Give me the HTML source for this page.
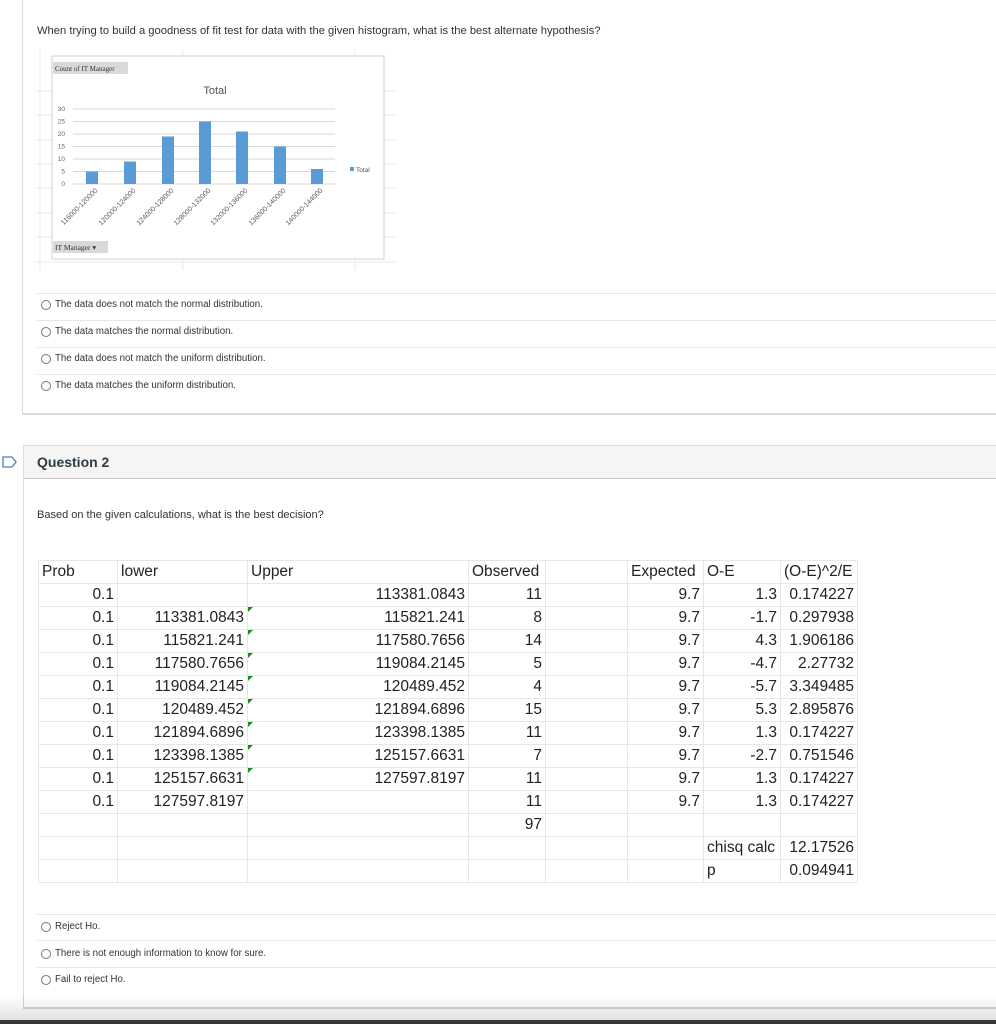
<!DOCTYPE html>
<html><head><meta charset="utf-8"><style>
body{margin:0;width:996px;height:1024px;overflow:hidden;background:#fff;font-family:"Liberation Sans",sans-serif;color:#2d3b45;position:relative}
.a{position:absolute}
.q{font-size:10px;white-space:nowrap}
.o{font-size:9.7px;color:#333}
.hl{position:absolute;height:1px;background:#e4e6e8;left:37px;right:0}
.r{position:absolute;width:8px;height:8px;border:1px solid #777;border-radius:50%;left:41px}
table{position:absolute;left:38px;top:560px;border-collapse:collapse;table-layout:fixed;font-size:15.5px;color:#222}
td{border:1px solid #e6e6e6;height:22px;padding:0 3px;text-align:right;white-space:nowrap;overflow:visible;line-height:22px;position:relative}
td.l{text-align:left}
.g::before{content:"";position:absolute;left:0;top:0;border-top:5px solid #1a8a1a;border-right:5px solid transparent}
</style></head><body>
<div class="a" style="left:22px;top:0;width:1px;height:414px;background:#dcdcdc"></div>
<div class="a" style="left:22px;top:413px;right:0;height:2px;background:#dcdcdc"></div>
<div class="a q" style="left:37px;top:25px;font-size:11.2px;color:#333">When trying to build a goodness of fit test for data with the given histogram, what is the best alternate hypothesis?</div>

<svg class="a" style="left:36px;top:46px" width="360" height="225" viewBox="36 46 360 225">
<g stroke="#e8e8e8" stroke-width="1">
<line x1="40" y1="50" x2="40" y2="270"/><line x1="183" y1="50" x2="183" y2="270"/><line x1="355" y1="50" x2="355" y2="270"/>
<line x1="36" y1="91" x2="396" y2="91"/><line x1="36" y1="115" x2="396" y2="115"/><line x1="36" y1="140" x2="396" y2="140"/><line x1="36" y1="164" x2="396" y2="164"/><line x1="36" y1="188" x2="396" y2="188"/><line x1="36" y1="213" x2="396" y2="213"/><line x1="36" y1="237" x2="396" y2="237"/><line x1="36" y1="262" x2="396" y2="262"/>
</g>
<rect x="52" y="56" width="332" height="203" fill="#fff" stroke="#d0d0d0"/>
<rect x="53" y="62" width="75" height="12" fill="#d9d9d9"/>
<text x="55" y="71" font-size="7" fill="#333" font-family="Liberation Serif">Count of IT Manager</text>
<text x="215" y="94" font-size="11" fill="#555" text-anchor="middle" font-family="Liberation Sans">Total</text>
<g stroke="#d9d9d9"><line x1="73" y1="109" x2="335" y2="109"/><line x1="73" y1="121.5" x2="335" y2="121.5"/><line x1="73" y1="134" x2="335" y2="134"/><line x1="73" y1="146.5" x2="335" y2="146.5"/><line x1="73" y1="159" x2="335" y2="159"/><line x1="73" y1="171.5" x2="335" y2="171.5"/><line x1="73" y1="184" x2="335" y2="184"/></g>
<g font-size="6.5" fill="#666" font-family="Liberation Sans" text-anchor="end">
<text x="65" y="111">30</text><text x="65" y="123.5">25</text><text x="65" y="136">20</text><text x="65" y="148.5">15</text><text x="65" y="161">10</text><text x="65" y="173.5">5</text><text x="65" y="186">0</text></g>
<g fill="#5b9bd5">
<rect x="86" y="171.5" width="12" height="12.5"/><rect x="124" y="161.5" width="12" height="22.5"/><rect x="162" y="136.5" width="12" height="47.5"/><rect x="199" y="121.5" width="12" height="62.5"/><rect x="236" y="131.5" width="12" height="52.5"/><rect x="274" y="146.5" width="12" height="37.5"/><rect x="311" y="169" width="12" height="15"/>
<rect x="350" y="167" width="4" height="4"/></g>
<text x="356" y="172" font-size="6.5" fill="#555" font-family="Liberation Sans">Total</text>
<g font-size="7" fill="#555" font-family="Liberation Sans" text-anchor="end">
<text transform="translate(98,191) rotate(-45)">116000-120000</text>
<text transform="translate(136,191) rotate(-45)">120000-124000</text>
<text transform="translate(174,191) rotate(-45)">124000-128000</text>
<text transform="translate(211,191) rotate(-45)">128000-132000</text>
<text transform="translate(248,191) rotate(-45)">132000-136000</text>
<text transform="translate(286,191) rotate(-45)">136000-140000</text>
<text transform="translate(323,191) rotate(-45)">140000-144000</text></g>
<rect x="53" y="241" width="55" height="12" fill="#d9d9d9"/>
<text x="55" y="250" font-size="7.5" fill="#333" font-family="Liberation Serif">IT Manager  ▾</text>
</svg>

<div class="hl" style="top:293px"></div><div class="hl" style="top:320px"></div><div class="hl" style="top:347px"></div><div class="hl" style="top:374px"></div>
<div class="r" style="top:300px"></div><div class="a q o" style="left:55px;top:299px">The data does not match the normal distribution.</div>
<div class="r" style="top:327px"></div><div class="a q o" style="left:55px;top:326px">The data matches the normal distribution.</div>
<div class="r" style="top:354px"></div><div class="a q o" style="left:55px;top:353px">The data does not match the uniform distribution.</div>
<div class="r" style="top:381px"></div><div class="a q o" style="left:55px;top:380px">The data matches the uniform distribution.</div>

<svg class="a" style="left:1px;top:455px" width="16" height="14"><path d="M2 2H11L15 7L11 12H2Z" fill="none" stroke="#4a7fb5" stroke-width="1.3"/></svg>
<div class="a" style="left:23px;top:445px;right:0;height:32px;background:#f5f5f5;border-top:1px solid #ddd;border-left:1px solid #ddd;border-bottom:1px solid #c8c8c8"></div>
<div class="a" style="left:37px;top:454px;font-size:14px;font-weight:bold;color:#2d3b45">Question 2</div>
<div class="a" style="left:23px;top:477px;width:1px;height:531px;background:#ddd"></div>
<div class="a q" style="left:37px;top:509px;font-size:11px;color:#333">Based on the given calculations, what is the best decision?</div>

<table>
<colgroup><col style="width:79px"><col style="width:130px"><col style="width:221px"><col style="width:77px"><col style="width:82px"><col style="width:76px"><col style="width:77px"><col style="width:77px"></colgroup>
<tr><td class="l">Prob</td><td class="l">lower</td><td class="l">Upper</td><td class="l">Observed</td><td></td><td class="l">Expected</td><td class="l">O-E</td><td class="l">(O-E)^2/E</td></tr>
<tr><td>0.1</td><td></td><td>113381.0843</td><td>11</td><td></td><td>9.7</td><td>1.3</td><td>0.174227</td></tr>
<tr><td>0.1</td><td>113381.0843</td><td class="g">115821.241</td><td>8</td><td></td><td>9.7</td><td>-1.7</td><td>0.297938</td></tr>
<tr><td>0.1</td><td>115821.241</td><td class="g">117580.7656</td><td>14</td><td></td><td>9.7</td><td>4.3</td><td>1.906186</td></tr>
<tr><td>0.1</td><td>117580.7656</td><td class="g">119084.2145</td><td>5</td><td></td><td>9.7</td><td>-4.7</td><td>2.27732</td></tr>
<tr><td>0.1</td><td>119084.2145</td><td class="g">120489.452</td><td>4</td><td></td><td>9.7</td><td>-5.7</td><td>3.349485</td></tr>
<tr><td>0.1</td><td>120489.452</td><td class="g">121894.6896</td><td>15</td><td></td><td>9.7</td><td>5.3</td><td>2.895876</td></tr>
<tr><td>0.1</td><td>121894.6896</td><td class="g">123398.1385</td><td>11</td><td></td><td>9.7</td><td>1.3</td><td>0.174227</td></tr>
<tr><td>0.1</td><td>123398.1385</td><td class="g">125157.6631</td><td>7</td><td></td><td>9.7</td><td>-2.7</td><td>0.751546</td></tr>
<tr><td>0.1</td><td>125157.6631</td><td class="g">127597.8197</td><td>11</td><td></td><td>9.7</td><td>1.3</td><td>0.174227</td></tr>
<tr><td>0.1</td><td>127597.8197</td><td></td><td>11</td><td></td><td>9.7</td><td>1.3</td><td>0.174227</td></tr>
<tr><td></td><td></td><td></td><td>97</td><td></td><td></td><td></td><td></td></tr>
<tr><td></td><td></td><td></td><td></td><td></td><td></td><td class="l">chisq calc</td><td>12.17526</td></tr>
<tr><td></td><td></td><td></td><td></td><td></td><td></td><td class="l">p</td><td>0.094941</td></tr>
</table>

<div class="hl" style="top:914px"></div><div class="hl" style="top:940px"></div><div class="hl" style="top:967px"></div>
<div class="r" style="top:922px"></div><div class="a q o" style="left:55px;top:921px">Reject Ho.</div>
<div class="r" style="top:949px"></div><div class="a q o" style="left:55px;top:948px">There is not enough information to know for sure.</div>
<div class="r" style="top:975px"></div><div class="a q o" style="left:55px;top:974px">Fail to reject Ho.</div>
<div class="a" style="left:0;top:995px;width:996px;height:25px;background:linear-gradient(#fff,#e2e2e2)"></div>
<div class="a" style="left:23px;top:995px;width:1px;height:13px;background:#ccc"></div>
<div class="a" style="left:23px;top:1007px;right:0;height:2px;background:#c8c8c8"></div>
<div class="a" style="left:0;top:1020px;width:996px;height:4px;background:#3a3632"></div>
</body></html>
